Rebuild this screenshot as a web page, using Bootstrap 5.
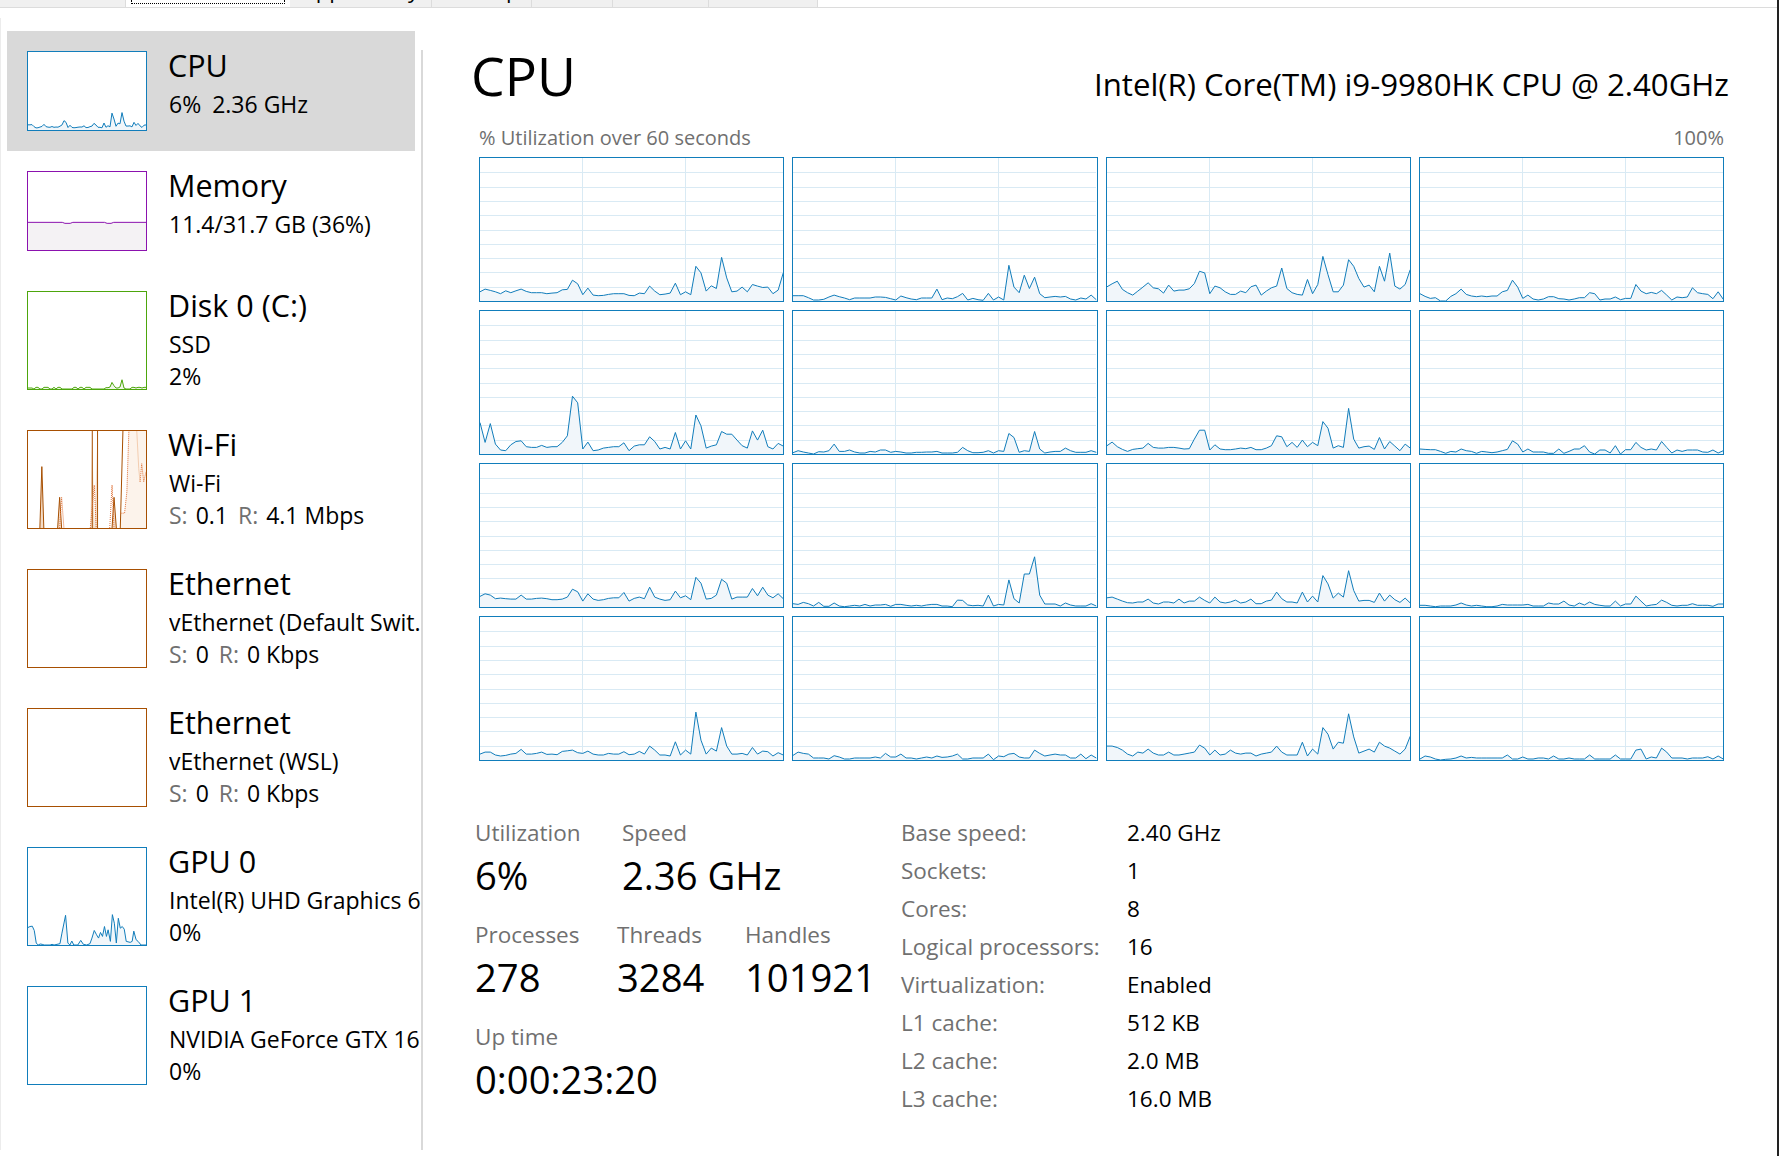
<!DOCTYPE html>
<html lang="en">
<head>
  <meta charset="UTF-8">
  <meta name="viewport" content="width=device-width, initial-scale=1.0">
  <title>Task Manager - Performance</title>
  <link href="https://cdn.jsdelivr.net/npm/bootstrap@5.3.0/dist/css/bootstrap.min.css" rel="stylesheet">
  <style>
    html, body { height: 1156px; overflow: hidden; }
    body {
      background: #fff;
      color: #000;
      font-family: "Open Sans", "Noto Sans", sans-serif;
      border-right: 2px solid #222;
    }
    /* tabs, only their bottom edge is on screen */
    .tab-strip { height: 8px; border-bottom: 1px solid #dcdcdc; overflow: hidden; }
    .tab-cell {
      background: #f0f0f0;
      border-right: 1px solid #dcdcdc;
      height: 7px;
      flex: none;
      overflow: hidden;
      font-size: 22px;
      line-height: 20px;
      text-align: center;
      white-space: nowrap;
    }
    .tab-cell span { display: block; margin-top: -21px; }
    .tab-active { background: #fff; border-right: 0; height: 8px; padding: 0 5px; }
    .tab-focus { height: 4px; border: 1px dotted #000; border-top: 0; }

    .page-body { height: 1142px; }
    .edge-left { width: 1px; flex: none; margin-top: 10px; background: #ececec; }
    .edge-side { width: 2px; flex: none; margin-top: 42px; background: #d9d9d9; }

    /* left list */
    .side-list { width: 420px; flex: none; padding: 23px 0 0 6px; overflow: hidden; }
    .perf-row { height: 139px; padding: 20px 0 0 20px; }
    .perf-short { height: 120px; }
    .perf-selected { background: #d9d9d9; margin-right: 6px; }
    .thumb { width: 120px; height: 99px; flex: none; border: 1px solid; background: #fff; }
    .perf-short .thumb { height: 80px; }
    .thumb svg { display: block; width: 100%; height: 100%; }
    .thumb-blue { border-color: #117dbb; }
    .thumb-purple { border-color: #8b12ae; }
    .thumb-green { border-color: #4da60c; }
    .thumb-orange { border-color: #a74f01; }
    .perf-text { margin: -6px 0 0 22px; min-width: 0; flex: 1; }
    .perf-title { font-size: 30.5px; line-height: 40px; margin: 0 0 3px -1px; white-space: nowrap; }
    .perf-sub { font-size: 23px; line-height: 32px; white-space: nowrap; overflow: hidden; }
    .perf-sub b { font-weight: 400; color: #707070; margin-right: 2px; }
    .perf-sub i { font-style: normal; margin-left: 11px; }

    /* main pane */
    .main-pane { padding: 36px 53px 0 56px; min-width: 0; width: 0; }
    .big-title { font-size: 53.5px; line-height: 64px; margin-left: -8px; }
    .cpu-name { font-size: 31.2px; line-height: 40px; margin: 0 -5px 4px 0; white-space: nowrap; }
    .graph-caption { font-size: 20px; line-height: 28px; color: #707070; margin: 16px 0 5px; }
    .graph-box { height: 145px; border: 1px solid #117dbb; }
    .graph-box svg { display: block; width: 100%; height: 100%; }

    .stat-wrap { margin-top: 53px; margin-left: -4px; }
    .stat-left { width: 426px; flex: none; padding-top: 3px; }
    .stat-row { height: 102px; }
    .stat-label { font-size: 22.5px; line-height: 32px; color: #707070; white-space: nowrap; }
    .stat-value { font-size: 38.2px; line-height: 52px; white-space: nowrap; }
    .w-util { width: 147px; }
    .w-proc { width: 142px; }
    .w-thre { width: 128px; }
    .spec-row { height: 38px; line-height: 38px; font-size: 22.5px; white-space: nowrap; }
    .spec-key { width: 226px; color: #707070; }
  </style>
</head>
<body>
  <!-- Tabs -->
  <div class="tab-strip d-flex">
    <div class="tab-cell" style="width:126px"><span>Processes</span></div>
    <div class="tab-cell tab-active" style="width:164px"><div class="tab-focus"></div></div>
    <div class="tab-cell" style="width:142px"><span>App history</span></div>
    <div class="tab-cell" style="width:100px"><span>Startup</span></div>
    <div class="tab-cell" style="width:81px"><span>Users</span></div>
    <div class="tab-cell" style="width:96px"><span>Details</span></div>
    <div class="tab-cell" style="width:109px"><span>Services</span></div>
  </div>

  <div class="page-body d-flex">
    <div class="edge-left"></div>

    <!-- Left list -->
    <div class="side-list">
      <div class="perf-row perf-short perf-selected d-flex align-items-start">
        <div class="thumb thumb-blue" id="thumbCpu"></div>
        <div class="perf-text">
          <div class="perf-title">CPU</div>
          <div class="perf-sub">6%<i>2.36 GHz</i></div>
        </div>
      </div>
      <div class="perf-row perf-short d-flex align-items-start">
        <div class="thumb thumb-purple" id="thumbMem"></div>
        <div class="perf-text">
          <div class="perf-title">Memory</div>
          <div class="perf-sub">11.4/31.7 GB (36%)</div>
        </div>
      </div>
      <div class="perf-row d-flex align-items-start">
        <div class="thumb thumb-green" id="thumbDisk"></div>
        <div class="perf-text">
          <div class="perf-title">Disk 0 (C:)</div>
          <div class="perf-sub">SSD</div>
          <div class="perf-sub">2%</div>
        </div>
      </div>
      <div class="perf-row d-flex align-items-start">
        <div class="thumb thumb-orange" id="thumbWifi"></div>
        <div class="perf-text">
          <div class="perf-title">Wi-Fi</div>
          <div class="perf-sub">Wi-Fi</div>
          <div class="perf-sub"><b>S:</b> 0.1 <b class="ms-1">R:</b> 4.1 Mbps</div>
        </div>
      </div>
      <div class="perf-row d-flex align-items-start">
        <div class="thumb thumb-orange"></div>
        <div class="perf-text">
          <div class="perf-title">Ethernet</div>
          <div class="perf-sub">vEthernet (Default Swit..</div>
          <div class="perf-sub"><b>S:</b> 0 <b class="ms-1">R:</b> 0 Kbps</div>
        </div>
      </div>
      <div class="perf-row d-flex align-items-start">
        <div class="thumb thumb-orange"></div>
        <div class="perf-text">
          <div class="perf-title">Ethernet</div>
          <div class="perf-sub">vEthernet (WSL)</div>
          <div class="perf-sub"><b>S:</b> 0 <b class="ms-1">R:</b> 0 Kbps</div>
        </div>
      </div>
      <div class="perf-row d-flex align-items-start">
        <div class="thumb thumb-blue" id="thumbGpu"></div>
        <div class="perf-text">
          <div class="perf-title">GPU 0</div>
          <div class="perf-sub">Intel(R) UHD Graphics 6..</div>
          <div class="perf-sub">0%</div>
        </div>
      </div>
      <div class="perf-row d-flex align-items-start">
        <div class="thumb thumb-blue"></div>
        <div class="perf-text">
          <div class="perf-title">GPU 1</div>
          <div class="perf-sub">NVIDIA GeForce GTX 16..</div>
          <div class="perf-sub">0%</div>
        </div>
      </div>
    </div>

    <div class="edge-side"></div>

    <!-- Main pane -->
    <div class="main-pane flex-grow-1">
      <div class="d-flex justify-content-between align-items-end">
        <div class="big-title">CPU</div>
        <div class="cpu-name">Intel(R) Core(TM) i9-9980HK CPU @ 2.40GHz</div>
      </div>
      <div class="graph-caption d-flex justify-content-between">
        <span>% Utilization over 60 seconds</span>
        <span>100%</span>
      </div>
      <div class="row row-cols-4 g-2" id="coreGraphs"></div>

      <div class="stat-wrap d-flex">
        <div class="stat-left">
          <div class="stat-row d-flex">
            <div class="w-util"><div class="stat-label">Utilization</div><div class="stat-value">6%</div></div>
            <div><div class="stat-label">Speed</div><div class="stat-value">2.36 GHz</div></div>
          </div>
          <div class="stat-row d-flex">
            <div class="w-proc"><div class="stat-label">Processes</div><div class="stat-value">278</div></div>
            <div class="w-thre"><div class="stat-label">Threads</div><div class="stat-value">3284</div></div>
            <div><div class="stat-label">Handles</div><div class="stat-value">101921</div></div>
          </div>
          <div class="stat-row">
            <div class="stat-label">Up time</div>
            <div class="stat-value">0:00:23:20</div>
          </div>
        </div>
        <div>
          <div class="spec-row d-flex"><div class="spec-key">Base speed:</div><div>2.40 GHz</div></div>
          <div class="spec-row d-flex"><div class="spec-key">Sockets:</div><div>1</div></div>
          <div class="spec-row d-flex"><div class="spec-key">Cores:</div><div>8</div></div>
          <div class="spec-row d-flex"><div class="spec-key">Logical processors:</div><div>16</div></div>
          <div class="spec-row d-flex"><div class="spec-key">Virtualization:</div><div>Enabled</div></div>
          <div class="spec-row d-flex"><div class="spec-key">L1 cache:</div><div>512 KB</div></div>
          <div class="spec-row d-flex"><div class="spec-key">L2 cache:</div><div>2.0 MB</div></div>
          <div class="spec-row d-flex"><div class="spec-key">L3 cache:</div><div>16.0 MB</div></div>
        </div>
      </div>
    </div>
  </div>

  <script>
    // Height of each sample, read off the reference at 3x (full scale = 433)
    const cores = [
      [28,36,32,28,22,31,25,31,36,29,25,25,25,22,24,25,34,35,63,52,19,39,18,16,17,20,22,22,22,17,16,24,22,45,30,19,21,24,54,19,28,19,105,85,30,46,38,132,70,28,30,42,28,50,45,41,42,22,33,85],
      [16,16,16,10,3,3,5,12,18,13,9,4,9,9,9,9,12,12,11,7,3,15,10,6,4,9,9,9,36,4,9,7,13,23,3,8,4,2,23,3,12,3,108,42,25,78,38,72,22,10,12,14,12,14,6,3,9,6,18,4],
      [43,52,60,35,25,18,30,42,55,40,37,24,48,30,33,33,37,53,90,85,22,45,40,28,20,20,30,25,43,48,18,30,40,45,100,38,25,20,18,65,22,50,135,80,28,28,48,125,105,68,42,48,28,105,60,145,45,36,50,95],
      [22,14,8,10,0,0,14,22,36,20,15,13,15,13,15,15,28,32,63,42,8,18,6,3,6,13,13,7,6,3,6,10,10,25,22,3,6,6,12,4,8,8,50,30,22,26,22,32,18,3,12,10,12,40,25,22,20,7,28,5],
      [95,35,92,30,12,10,28,38,40,22,20,20,26,20,22,22,35,55,175,155,15,36,10,12,18,20,22,22,34,10,24,28,28,52,38,15,20,15,65,15,40,15,118,85,18,24,28,68,60,60,42,25,18,70,42,72,22,15,32,24],
      [4,10,6,3,0,7,6,10,30,8,8,12,6,3,3,8,6,12,12,5,8,6,3,3,5,5,6,6,8,3,3,3,5,20,10,4,4,5,10,3,10,8,62,50,5,10,8,68,15,3,6,8,8,18,10,5,5,5,10,5],
      [25,36,22,14,8,14,16,18,32,20,18,18,20,20,18,15,16,45,72,72,12,28,15,13,13,15,18,16,20,13,13,18,25,55,52,22,35,20,42,22,35,25,98,78,18,25,20,138,45,18,22,24,14,50,15,38,24,10,30,18],
      [15,14,13,13,8,2,8,6,15,10,8,2,8,6,4,6,10,14,40,30,6,15,6,6,6,2,2,15,2,8,15,15,25,6,0,12,12,3,25,0,13,13,35,20,12,15,12,38,20,3,12,8,12,12,12,6,5,12,3,10],
      [32,40,36,25,27,25,24,24,36,24,24,26,27,25,22,22,24,30,54,46,18,40,24,20,22,26,28,28,44,18,26,30,25,60,30,24,20,22,48,28,34,22,90,72,24,26,36,84,72,24,30,30,30,56,34,60,36,28,40,25],
      [10,8,14,10,3,14,2,2,12,3,1,3,5,3,8,3,6,6,8,2,8,8,5,3,5,3,6,8,8,3,3,1,21,20,6,4,5,3,36,3,8,6,82,25,12,100,100,152,36,9,9,9,3,12,6,3,3,3,10,3],
      [28,30,24,18,13,12,15,15,24,12,9,15,15,12,24,12,18,18,30,20,12,30,15,12,15,21,12,15,24,10,10,18,21,45,25,15,15,12,45,15,33,15,95,70,27,42,30,110,50,18,20,20,14,42,18,36,22,14,27,12],
      [5,5,3,1,3,3,3,6,12,6,3,5,3,1,1,3,8,6,6,6,6,8,3,3,3,12,9,9,18,6,3,12,6,15,8,5,3,3,18,3,9,9,33,18,3,6,8,21,14,5,3,5,5,10,5,5,5,2,9,9],
      [18,24,24,15,12,14,18,20,32,18,18,20,24,17,18,16,26,28,30,22,20,27,18,15,15,20,18,18,25,16,18,26,18,42,30,15,15,12,55,15,30,18,145,60,18,36,27,98,42,18,18,20,15,38,18,27,25,12,22,15],
      [14,24,20,18,6,6,6,3,13,9,3,3,6,6,6,6,9,6,20,9,9,18,6,6,3,6,9,6,12,8,9,12,18,3,3,6,6,6,18,1,12,10,18,20,9,6,6,30,20,12,15,18,15,15,6,6,18,4,15,6],
      [42,42,38,30,18,12,24,21,33,21,15,15,24,15,15,18,21,24,45,36,15,30,15,18,30,21,18,21,21,12,18,21,24,42,24,15,15,15,54,12,33,18,98,78,33,54,51,140,70,21,27,33,24,54,42,36,27,18,33,72],
      [3,12,9,3,0,2,3,6,12,6,8,6,6,6,6,6,6,15,3,3,9,3,3,6,6,3,12,3,3,6,3,3,3,15,3,3,3,3,15,3,3,3,30,33,3,9,6,36,24,6,6,6,3,6,6,6,10,3,12,3]
    ];

    function svgFor(w, h, body) {
      return `<svg viewBox="0 0 ${w} ${h}" preserveAspectRatio="none">${body}</svg>`;
    }

    // Closed area under a line plus the line itself
    function area(points, w, h, stroke, fill) {
      const line = points.map(p => p[0].toFixed(1) + ',' + p[1].toFixed(1)).join(' ');
      return `<polygon points="0,${h} ${line} ${w},${h}" fill="${fill}"/>` +
        `<polyline points="${line}" fill="none" stroke="${stroke}" stroke-width="1" vector-effect="non-scaling-stroke"/>`;
    }

    function fromHeights(values, w, h, scale) {
      return values.map((v, i) => [i / 59 * w, h - v * scale]);
    }

    // Big core graphs
    const W = 303, H = 143;
    let grid = '';
    for (let i = 1; i < 10; i++) {
      const y = Math.round(H * i / 10) + 0.5;
      grid += `<line x1="0" x2="${W}" y1="${y}" y2="${y}"/>`;
    }
    [0.338, 0.677].forEach(f => {
      const x = Math.round(W * f) + 0.5;
      grid += `<line x1="${x}" x2="${x}" y1="0" y2="${H}"/>`;
    });
    grid = `<g stroke="#d9eaf4" stroke-width="1" shape-rendering="crispEdges">${grid}</g>`;

    document.getElementById('coreGraphs').innerHTML = cores.map(values => {
      const pts = fromHeights(values, W, H, H / 433);
      return `<div class="col"><div class="graph-box">${svgFor(W, H, grid + area(pts, W, H, '#117dbb', '#f1f6fa'))}</div></div>`;
    }).join('');

    // Sidebar thumbnails, drawn in 3x units
    const avg = cores[0].map((_, i) => cores.reduce((sum, c) => sum + c[i], 0) / cores.length);
    document.getElementById('thumbCpu').innerHTML = svgFor(358, 237,
      area(fromHeights(avg, 358, 237, 237 / 433 * 1.15), 358, 237, '#117dbb', '#f1f6fa'));

    const mem = [[0,153],[104,153],[112,156],[128,156],[136,153],[232,153],[240,156],[252,156],[260,153],[358,153]];
    document.getElementById('thumbMem').innerHTML = svgFor(358, 237, area(mem, 358, 237, '#8b12ae', '#f4f2f4'));

    const disk = [3,3,3,0,5,5,0,0,5,5,5,0,0,5,0,5,5,0,0,0,0,0,0,5,5,0,5,5,0,5,5,5,0,0,0,0,0,0,0,4,4,6,20,10,3,3,6,28,3,0,0,0,5,5,3,5,5,3,5,5];
    document.getElementById('thumbDisk').innerHTML = svgFor(358, 294,
      area(fromHeights(disk, 358, 294, 1), 358, 294, '#4da60c', '#eff7e9'));

    const gpu = [[0,241],[6,238],[13,237],[19,250],[25,288],[31,294],[37,291],[43,292],[49,294],[67,294],[73,292],[79,294],[97,290],[103,258],[114,204],[121,288],[127,294],[133,282],[139,294],[151,294],[160,280],[168,292],[178,294],[188,290],[194,273],[201,250],[208,263],[214,273],[220,256],[226,268],[232,238],[238,268],[243,248],[250,283],[256,202],[262,228],[268,288],[274,213],[280,243],[286,238],[292,246],[298,283],[310,286],[316,283],[321,252],[328,278],[334,283],[343,294],[358,294]];
    document.getElementById('thumbGpu').innerHTML = svgFor(358, 294, area(gpu, 358, 294, '#117dbb', '#f1f6fa'));

    // Wi-Fi: receive fill, solid send spikes and dotted receive spikes
    document.getElementById('thumbWifi').innerHTML = svgFor(358, 294, `
      <polygon points="281,294 281,249 293,249 300,184 306,0 358,0 358,294" fill="#fcf3eb"/>
      <polyline points="330,0 336,114 340,154" fill="none" stroke="#f3cdb0" stroke-width="1" vector-effect="non-scaling-stroke"/>
      <g fill="#f3dcc8" stroke="none">
        <polygon points="36,294 42,108 48,294"/>
        <polygon points="90,294 96,201 102,294"/>
        <polygon points="189,294 195,0 201,294"/>
        <polygon points="201,294 211,0 212,294"/>
        <polygon points="255,294 261,201 268,294"/>
      </g>
      <g fill="none" stroke="#a74f01" stroke-width="1" vector-effect="non-scaling-stroke">
        <polyline vector-effect="non-scaling-stroke" points="36,294 42,108 48,294"/>
        <polyline vector-effect="non-scaling-stroke" points="90,294 96,201 102,294"/>
        <polyline vector-effect="non-scaling-stroke" points="195,294 195,0"/>
        <polyline vector-effect="non-scaling-stroke" points="211,294 211,0"/>
        <polyline vector-effect="non-scaling-stroke" points="255,294 261,201 268,294"/>
        <polyline vector-effect="non-scaling-stroke" points="280,294 288,0"/>
      </g>
      <g fill="none" stroke="#e0733a" stroke-width="1" stroke-dasharray="1 1" vector-effect="non-scaling-stroke">
        <polyline vector-effect="non-scaling-stroke" points="96,294 102,201 109,294"/>
        <polyline vector-effect="non-scaling-stroke" points="189,294 201,164 207,294"/>
        <polyline vector-effect="non-scaling-stroke" points="248,294 255,164 261,294"/>
        <polyline vector-effect="non-scaling-stroke" points="281,249 293,249 300,184 306,0"/>
        <polyline vector-effect="non-scaling-stroke" points="340,154 345,99 351,154 358,124"/>
      </g>`);
  </script>
  <script src="https://cdn.jsdelivr.net/npm/bootstrap@5.3.0/dist/js/bootstrap.bundle.min.js"></script>
</body>
</html>
